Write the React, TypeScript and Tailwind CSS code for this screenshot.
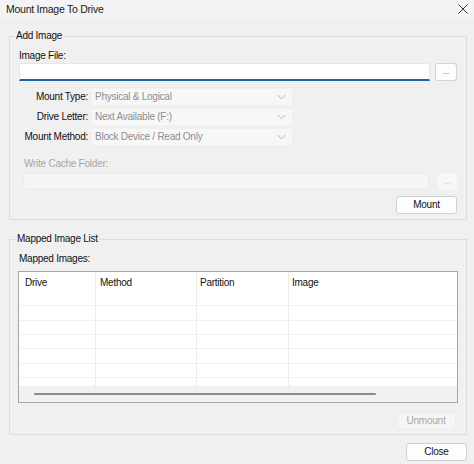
import React from "react";

function Chevron() {
  return (
    <svg width="9" height="6" viewBox="0 0 9 6" className="shrink-0">
      <path d="M0.5 0.8 L4.5 4.8 L8.5 0.8" fill="none" stroke="#b4b4b4" strokeWidth="1" />
    </svg>
  );
}

function Dropdown({ label, value }: { label: string; value: string }) {
  return (
    <div className="flex items-center h-[16px]">
      <div className="w-[73px] pr-[4px] text-right text-[#111]">{label}</div>
      <div className="w-[200px] h-[16px] bg-[#f7f7f7] flex items-center justify-between pl-[3px] pr-[6px] text-[#8d8d8d]">
        <span>{value}</span>
        <Chevron />
      </div>
    </div>
  );
}

const rowHeights = ["h-[14px]", "h-[15px]", "h-[14px]", "h-[14px]", "h-[15px]", "h-[14px]"];

function Row({ h, last }: { h: string; last?: boolean }) {
  return (
    <div className={`flex ${h} ${last ? "" : "border-b border-[#f0f0f0]"}`}>
      <div className="w-[77px] border-r border-[#ececec]" />
      <div className="w-[101px] border-r border-[#ececec]" />
      <div className="w-[92px] border-r border-[#ececec]" />
      <div className="flex-1" />
    </div>
  );
}

export default function App() {
  return (
    <div className="w-[474px] h-[464px] bg-[#f0f0f0] font-['Liberation_Sans',Arial,sans-serif] text-[10px] leading-[14px] text-black overflow-hidden flex flex-col tracking-[-0.25px]">
      {/* Title bar */}
      <div className="h-[18px] flex items-center justify-between pl-[6px] pr-[6px] bg-[#f3f3f3]">
        <span className="text-[10.5px] text-[#1a1a1a]">Mount Image To Drive</span>
        <svg width="10" height="10" viewBox="0 0 10 10">
          <path d="M0.5 0.5 L9.5 9.5 M9.5 0.5 L0.5 9.5" stroke="#333" strokeWidth="1" />
        </svg>
      </div>

      {/* Add Image group */}
      <fieldset className="mt-[11px] ml-[9px] w-[458px] border border-[#dcdcdc] p-0 pb-[5px] flex flex-col">
        <legend className="ml-[5px] px-[1px] leading-[14px] text-[#111]">Add Image</legend>
        <div className="mt-[6px] ml-[9px] text-[#111]">Image File:</div>
        <div className="flex ml-[9px] h-[18px]">
          <div className="w-[411px] h-[18px] bg-white border border-[#e6e6e6] border-b-2 border-b-[#1f63a6] rounded-t-[2px]" />
          <div className="ml-[5px] w-[22px] h-[18px] bg-[#fdfdfd] border border-[#d2d2d2] rounded-[3px] flex items-center justify-center text-[#555] text-[8px]">
            ...
          </div>
        </div>
        <div className="mt-[8px] ml-[9px] flex flex-col gap-[4px]">
          <Dropdown label="Mount Type:" value="Physical & Logical" />
          <Dropdown label="Drive Letter:" value="Next Available (F:)" />
          <Dropdown label="Mount Method:" value="Block Device / Read Only" />
        </div>
        <div className="mt-[12px] ml-[14px] text-[#a6a6a6]">Write Cache Folder:</div>
        <div className="flex mt-[2px] ml-[13px]">
          <div className="w-[406px] h-[16px] bg-[#f5f5f5] border border-[#ebebeb] rounded-[2px]" />
          <div className="ml-[9px] w-[19px] h-[17px] bg-[#f7f7f7] rounded-[3px] flex items-center justify-center text-[#b8b8b8] text-[8px]">
            ...
          </div>
        </div>
        <div className="mt-[6px] mr-[9px] self-end w-[61px] h-[18px] bg-[#fdfdfd] border border-[#d0d0d0] rounded-[3px] flex items-center justify-center text-[#111]">
          Mount
        </div>
      </fieldset>

      {/* Mapped Image List group */}
      <fieldset className="mt-[12px] ml-[9px] w-[458px] border border-[#dcdcdc] p-0 pb-[5px] flex flex-col">
        <legend className="ml-[6px] px-[1px] leading-[14px] text-[#111]">Mapped Image List</legend>
        <div className="mt-[6px] ml-[9px] text-[#111]">Mapped Images:</div>
        <div className="mt-[5px] ml-[8px] w-[440px] h-[132px] bg-white border border-[#a6a6a6] flex flex-col">
          <div className="flex h-[20px] text-[#111]">
            <div className="w-[77px] border-r border-[#ececec] pl-[6px] pt-[4px]">Drive</div>
            <div className="w-[101px] border-r border-[#ececec] pl-[4px] pt-[4px]">Method</div>
            <div className="w-[92px] border-r border-[#ececec] pl-[3px] pt-[4px]">Partition</div>
            <div className="flex-1 pl-[3px] pt-[4px]">Image</div>
          </div>
          {rowHeights.map((h, i) => (
            <Row key={i} h={h} />
          ))}
          <Row h="h-[8px]" last />
          <div className="flex-1 bg-[#f0f0f0] flex items-center pl-[15px]">
            <div className="w-[342px] h-[2px] bg-[#8a8a8a] rounded-full" />
          </div>
        </div>
        <div className="mt-[9px] mr-[10px] self-end w-[60px] h-[17px] bg-[#f5f5f5] border border-[#ececec] rounded-[3px] flex items-center justify-center text-[#a8a8a8]">
          Unmount
        </div>
      </fieldset>

      <div className="mt-[8px] mr-[7px] self-end w-[61px] h-[18px] bg-[#fdfdfd] border border-[#d0d0d0] rounded-[3px] flex items-center justify-center text-[#111]">
        Close
      </div>
    </div>
  );
}
